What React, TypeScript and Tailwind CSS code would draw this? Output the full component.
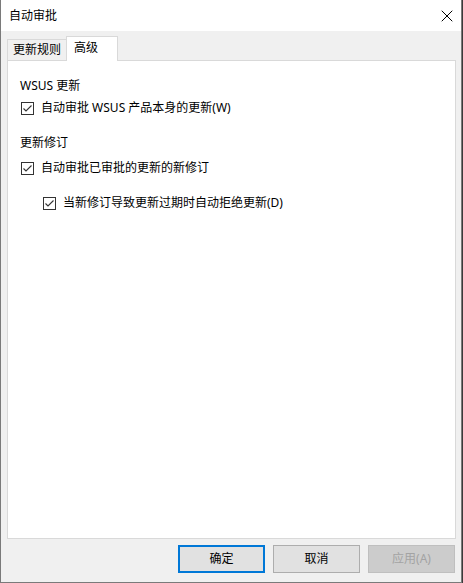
import { X } from 'lucide-react';

const font = { fontFamily: '"Noto Sans", "Noto Sans CJK SC", sans-serif' };

function CheckRow({ label, indent = false }: { label: string; indent?: boolean }) {
  return (
    <div className={`flex items-center h-[16px] ${indent ? 'pl-[22px]' : ''}`}>
      <div className="w-[13px] h-[13px] border border-[#333333] bg-white flex items-center justify-center">
        <svg width="11" height="11" viewBox="0 0 11 11" fill="none">
          <path d="M1.5 5.5 L4 8 L9.5 2.5" stroke="#333333" strokeWidth="1.1" />
        </svg>
      </div>
      <span className="ml-[7px] text-[12px] leading-[16px] text-black whitespace-nowrap">{label}</span>
    </div>
  );
}

export default function App() {
  return (
    <div className="w-[463px] h-[583px] bg-[#3a3a3a]" style={font}>
      <div className="w-[462px] h-[583px] flex flex-col border-l border-r border-b border-[#7a7a7a] bg-[#f0f0f0]">
        {/* Title bar */}
        <div className="h-[31px] bg-white flex items-center justify-between pl-[8px] pr-[4px]">
          <span className="text-[12px] leading-[16px] text-black">自动审批</span>
          <X className="h-[20px] w-[20px] text-black" strokeWidth={1.2} />
        </div>

        {/* Tabs */}
        <div className="mt-[5px] pl-[6px] flex items-end h-[24px]">
          <div className="h-[21px] w-[59px] border-l border-t border-[#d9d9d9] bg-[#f0f0f0] flex items-center justify-center">
            <span className="text-[12px] leading-[16px] text-black">更新规则</span>
          </div>
          <div className="relative z-10 -mb-px h-[25px] w-[52px] border-l border-r border-t border-[#d9d9d9] bg-white flex items-center pl-[7px] pb-[2px]">
            <span className="text-[12px] leading-[16px] text-black">高级</span>
          </div>
        </div>

        {/* Panel */}
        <div className="ml-[6px] w-[449px] h-[479px] border border-[#d9d9d9] bg-white pl-[12px] pt-[17px]">
          <div className="text-[12px] leading-[16px] text-black">WSUS 更新</div>
          <div className="mt-[6px] pl-[1px]">
            <CheckRow label="自动审批 WSUS 产品本身的更新(W)" />
          </div>
          <div className="mt-[19px] text-[12px] leading-[16px] text-black">更新修订</div>
          <div className="mt-[9px] pl-[1px]">
            <CheckRow label="自动审批已审批的更新的新修订" />
          </div>
          <div className="mt-[19px] pl-[1px]">
            <CheckRow label="当新修订导致更新过期时自动拒绝更新(D)" indent />
          </div>
        </div>

        {/* Buttons */}
        <div className="mt-[6px] flex justify-end gap-[8px] pr-[6px]">
          <button className="w-[87px] h-[28px] border-2 border-[#0078d7] bg-[#e1e1e1] text-[12px] text-black">确定</button>
          <button className="w-[87px] h-[28px] border border-[#adadad] bg-[#e1e1e1] text-[12px] text-black">取消</button>
          <button className="w-[87px] h-[28px] border border-[#bfbfbf] bg-[#cccccc] text-[12px] text-[#a3a3a3]">应用(A)</button>
        </div>
      </div>
    </div>
  );
}
